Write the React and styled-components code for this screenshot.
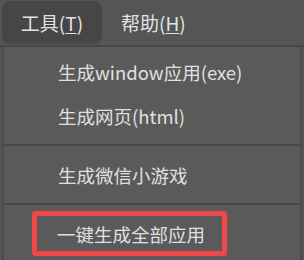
import styled, { createGlobalStyle } from 'styled-components'

const GlobalStyle = createGlobalStyle`
  body {
    margin: 0;
    background: #555555;
    font-family: "Noto Sans CJK SC", "Noto Sans", sans-serif;
  }
`

const Wrapper = styled.div`
  width: 304px;
  height: 260px;
  overflow: hidden;
  background: #555555;
`

const MenuBar = styled.div`
  display: flex;
  align-items: center;
  height: 47px;
  padding: 0 2px;
  box-sizing: border-box;
  border-bottom: 2px solid #474747;
`

const MenuTab = styled.div`
  display: flex;
  align-items: center;
  justify-content: ${(p) => (p.$active ? 'center' : 'flex-start')};
  width: ${(p) => (p.$active ? '100px' : 'auto')};
  height: 43px;
  padding: ${(p) => (p.$active ? '0' : '0 0 0 19px')};
  border-radius: 8px;
  background: ${(p) => (p.$active ? '#464646' : 'transparent')};
  color: #e2e2e2;
  font-size: 19px;
`

const Key = styled.span`
  text-decoration: underline;
  text-underline-offset: 2px;
`

const Panel = styled.div`
  margin: 0 2px;
  height: 213px;
  background: #5a5a5a;
  border-left: 2px solid #4b4b4b;
  border-right: 2px solid #4b4b4b;
  padding-top: 3px;
  box-sizing: border-box;
`

const Item = styled.div`
  display: flex;
  align-items: center;
  height: ${(p) => (p.$boxed ? '45px' : '44px')};
  margin-top: ${(p) => p.$gap || 0}px;
  padding-left: ${(p) => (p.$boxed ? '28px' : '54px')};
  color: #e0e0e0;
  font-size: 18.5px;
  white-space: nowrap;
`

const Boxed = styled.span`
  display: flex;
  align-items: center;
  width: 165px;
  height: 35px;
  padding-left: 20px;
  border: 5px solid #f04848;
  border-radius: 3px;
`

const Separator = styled.div`
  height: 2px;
  margin-top: ${(p) => p.$gap || 0}px;
  background: #484848;
`

export default function App() {
  return (
    <Wrapper>
      <GlobalStyle />
      <MenuBar>
        <MenuTab $active>
          工具(<Key>T</Key>)
        </MenuTab>
        <MenuTab>
          帮助(<Key>H</Key>)
        </MenuTab>
      </MenuBar>
      <Panel>
        <Item>生成window应用(exe)</Item>
        <Item>生成网页(html)</Item>
        <Separator $gap={6} />
        <Item $gap={7}>生成微信小游戏</Item>
        <Separator $gap={6} />
        <Item $gap={6} $boxed>
          <Boxed>一键生成全部应用</Boxed>
        </Item>
      </Panel>
    </Wrapper>
  )
}
